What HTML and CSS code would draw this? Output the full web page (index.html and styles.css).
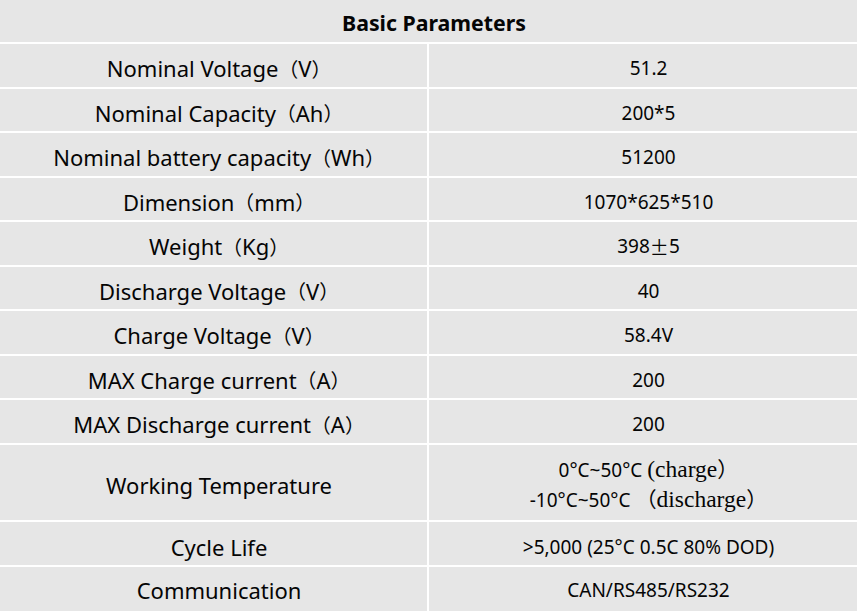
FILE: index.html
```html
<!DOCTYPE html>
<html lang="en">
<head>
<meta charset="utf-8">
<title>Basic Parameters</title>
<link rel="stylesheet" href="styles.css">
</head>
<body>
<div class="table">
  <div class="cell head">Basic Parameters</div>
  <div class="cell label">Nominal Voltage<span class="fw">（</span>V<span class="fw">）</span></div>
  <div class="cell value">51.2</div>
  <div class="cell label">Nominal Capacity<span class="fw">（</span>Ah<span class="fw">）</span></div>
  <div class="cell value">200*5</div>
  <div class="cell label">Nominal battery capacity<span class="fw">（</span>Wh<span class="fw">）</span></div>
  <div class="cell value">51200</div>
  <div class="cell label">Dimension<span class="fw">（</span>mm<span class="fw">）</span></div>
  <div class="cell value">1070*625*510</div>
  <div class="cell label">Weight<span class="fw">（</span>Kg<span class="fw">）</span></div>
  <div class="cell value">398<span class="pm">±</span>5</div>
  <div class="cell label">Discharge Voltage<span class="fw">（</span>V<span class="fw">）</span></div>
  <div class="cell value">40</div>
  <div class="cell label">Charge Voltage<span class="fw">（</span>V<span class="fw">）</span></div>
  <div class="cell value">58.4V</div>
  <div class="cell label">MAX Charge current<span class="fw">（</span>A<span class="fw">）</span></div>
  <div class="cell value">200</div>
  <div class="cell label">MAX Discharge current<span class="fw">（</span>A<span class="fw">）</span></div>
  <div class="cell value">200</div>
  <div class="cell label">Working Temperature</div>
  <div class="cell value temp">
    <div>0°C~50°C <span class="serif">(charge<span class="fw">）</span></span></div>
    <div>-10°C~50°C <span class="serif"><span class="fw">（</span>discharge<span class="fw">）</span></span></div>
  </div>
  <div class="cell label">Cycle Life</div>
  <div class="cell value">&gt;5,000 (25°C 0.5C 80% DOD)</div>
  <div class="cell label last">Communication</div>
  <div class="cell value last">CAN/RS485/RS232</div>
</div>
</body>
</html>
```

FILE: styles.css
```css
html, body {
  margin: 0;
  padding: 0;
  background: #ffffff;
}

.table {
  width: 857px;
  display: grid;
  grid-template-columns: 427px 428px;
  grid-template-rows: 42px repeat(9, 42.5px) 75.5px 43px 44px;
  column-gap: 2px;
  row-gap: 2px;
  font-family: "Noto Sans", "Noto Sans CJK SC", sans-serif;
  color: #050505;
}

.cell {
  background: #e6e6e6;
  display: flex;
  align-items: center;
  justify-content: center;
  text-align: center;
  white-space: nowrap;
  padding-top: 6px;
  padding-left: 11px;
  box-sizing: border-box;
}

.head {
  grid-column: 1 / 3;
  font-weight: 700;
  font-size: 21.3px;
  padding-top: 2px;
}

.label {
  font-size: 22px;
}

.value {
  font-size: 19px;
}

.last {
  padding-top: 1px;
}

.fw {
  font-family: "Noto Sans CJK SC", sans-serif;
  font-size: 0.9em;
}

.pm {
  font-family: "Noto Sans CJK SC", sans-serif;
}

.temp {
  flex-direction: column;
  line-height: 27px;
  padding-top: 4px;
}

.serif {
  font-family: "Liberation Serif", "Noto Sans CJK SC", serif;
  font-size: 23.5px;
}
```
